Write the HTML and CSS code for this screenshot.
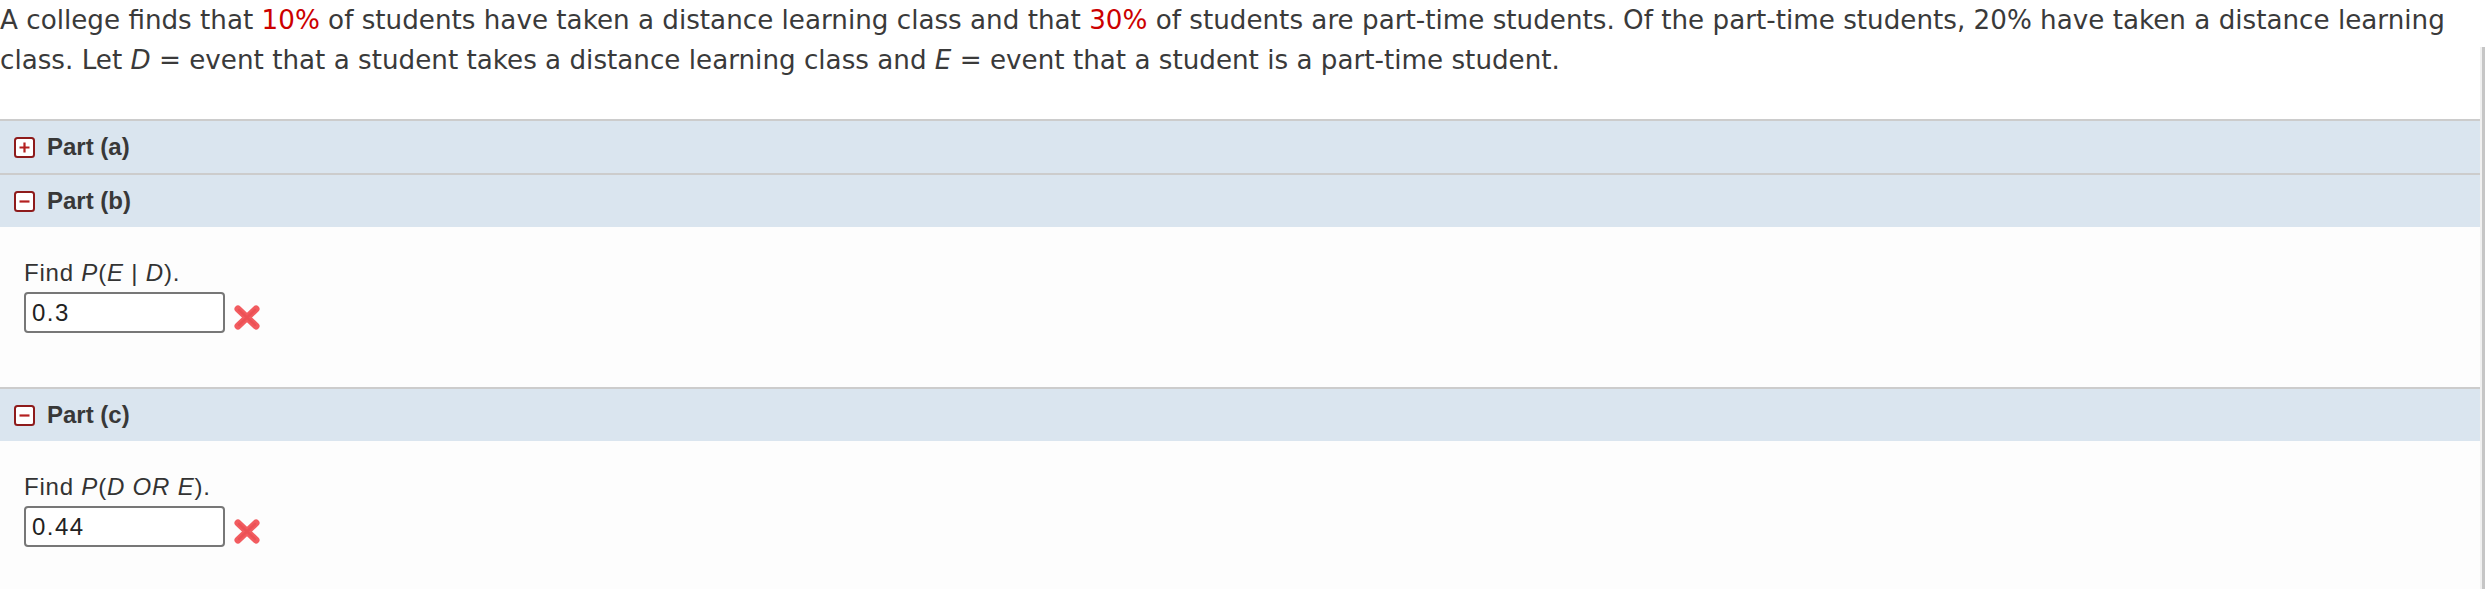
FILE: index.html
```html
<!DOCTYPE html>
<html lang="en">
<head>
<meta charset="utf-8">
<title>Distance learning probability</title>
<link rel="stylesheet" href="styles.css">
</head>
<body>
<div class="page">
  <p class="intro">A college finds that <span class="hl">10%</span> of students have taken a distance learning class and that <span class="hl">30%</span> of students are part-time students. Of the part-time students, 20% have taken a distance learning<br>class. Let <i>D</i> = event that a student takes a distance learning class and <i>E</i> = event that a student is a part-time student.</p>

  <section class="part">
    <div class="part-head">
      <span class="toggle"><svg viewBox="0 0 21 21" width="21" height="21"><rect x="1" y="1" width="19" height="19" rx="2.5" fill="#fff" stroke="#8e1b1b" stroke-width="2"/><path d="M5.5 10.5h10M10.5 5.5v10" stroke="#b42020" stroke-width="2.2"/></svg></span>
      <span class="part-title">Part (a)</span>
    </div>
  </section>

  <section class="part">
    <div class="part-head">
      <span class="toggle"><svg viewBox="0 0 21 21" width="21" height="21"><rect x="1" y="1" width="19" height="19" rx="2.5" fill="#fff" stroke="#8e1b1b" stroke-width="2"/><path d="M5.5 10.5h10" stroke="#b42020" stroke-width="2.2"/></svg></span>
      <span class="part-title">Part (b)</span>
    </div>
    <div class="part-body">
      <p class="q">Find <i>P</i>(<i>E</i> | <i>D</i>).</p>
      <div class="answer-row">
        <input class="answer" type="text" value="0.3">
        <span class="wrong"><svg viewBox="0 0 28 27" width="28" height="27"><path d="M5 5L23 22M23 5L5 22" stroke="#f25c60" stroke-width="7" stroke-linecap="round"/><path d="M6 6L22 21M22 6L6 21" stroke="#e8474b" stroke-width="2.5" stroke-linecap="round" opacity="0.5"/></svg></span>
      </div>
    </div>
  </section>

  <section class="part">
    <div class="part-head">
      <span class="toggle"><svg viewBox="0 0 21 21" width="21" height="21"><rect x="1" y="1" width="19" height="19" rx="2.5" fill="#fff" stroke="#8e1b1b" stroke-width="2"/><path d="M5.5 10.5h10" stroke="#b42020" stroke-width="2.2"/></svg></span>
      <span class="part-title">Part (c)</span>
    </div>
    <div class="part-body">
      <p class="q">Find <i>P</i>(<i>D</i> <i>OR</i> <i>E</i>).</p>
      <div class="answer-row">
        <input class="answer" type="text" value="0.44">
        <span class="wrong"><svg viewBox="0 0 28 27" width="28" height="27"><path d="M5 5L23 22M23 5L5 22" stroke="#f25c60" stroke-width="7" stroke-linecap="round"/><path d="M6 6L22 21M22 6L6 21" stroke="#e8474b" stroke-width="2.5" stroke-linecap="round" opacity="0.5"/></svg></span>
      </div>
    </div>
  </section>
</div>
</body>
</html>
```
FILE: styles.css
```css
html, body {
  margin: 0;
  padding: 0;
  background: #ffffff;
}

.page {
  position: relative;
  padding-right: 5px;
  min-height: 589px;
  box-sizing: border-box;
}

.page::after {
  content: "";
  position: absolute;
  right: 0;
  top: 47px;
  bottom: 0;
  width: 3px;
  border-left: 2px solid #f0f0f0;
  background: #c6c6c6;
}

.intro {
  margin: 0 0 39px 0;
  font-family: "DejaVu Sans", Verdana, sans-serif;
  font-size: 26.2px;
  line-height: 40px;
  color: #3a3a3a;
}

.intro i {
  font-style: italic;
}

.hl {
  color: #cc0000;
}

.part-head {
  display: flex;
  align-items: center;
  gap: 12px;
  height: 52px;
  padding-left: 14px;
  border-top: 2px solid #cccccc;
  background: #dae5ef;
}

.toggle {
  display: flex;
  width: 21px;
  height: 21px;
}

.part-title {
  font-family: "Liberation Sans", Arial, sans-serif;
  font-weight: bold;
  font-size: 24px;
  color: #383838;
}

.part-body {
  padding: 31px 0 54px 24px;
  background: #fdfdfd;
  font-family: "Liberation Sans", Arial, sans-serif;
  color: #333333;
}

.q {
  margin: 0 0 4px 0;
  font-size: 24px;
  line-height: 30px;
  letter-spacing: 0.8px;
}

.answer-row {
  display: flex;
  align-items: flex-end;
  gap: 8px;
}

.answer {
  box-sizing: border-box;
  width: 201px;
  height: 41px;
  margin: 0;
  padding: 0 0 0 6px;
  border: 2px solid #777777;
  border-radius: 4px;
  font-family: "Liberation Sans", Arial, sans-serif;
  font-size: 24px;
  letter-spacing: 1.5px;
  color: #222222;
  background: #ffffff;
}

.wrong {
  display: flex;
  margin-bottom: 2px;
}
```
